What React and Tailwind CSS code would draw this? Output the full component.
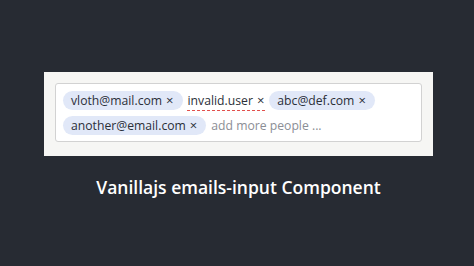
import React from 'react';

const Chip = ({ children }) => (
  <span className="inline-flex items-center h-[19px] pl-[8px] pr-[9px] rounded-full bg-[#e1e8f8] text-[#2b2f38]">
    {children}
    <span className="ml-[4px] text-[13px]">×</span>
  </span>
);

const EmailsInput = () => {
  return (
    <div className="w-[367px] h-[59px] bg-white border border-[#d2d2d2] rounded-[3px] px-[7px] pt-[7px] flex flex-wrap content-start gap-x-[4px] gap-y-[6px] text-[12.2px] leading-[19px]">
      <Chip>vloth@mail.com</Chip>
      <span className="inline-flex items-center h-[20px] -mb-[1px] px-[1px] text-[#2b2f38] border-b border-dashed border-[#e2504c]">
        invalid.user
        <span className="ml-[4px] text-[13px]">×</span>
      </span>
      <Chip>abc@def.com</Chip>
      <Chip>another@email.com</Chip>
      <span className="inline-flex items-center h-[19px] pl-[1px] text-[#8b8e95]">add more people ...</span>
    </div>
  );
};

const App = () => {
  return (
    <div className="w-[474px] h-[266px] bg-[#272b33] pt-[72px] pl-[44px]" style={{ fontFamily: '"Open Sans", sans-serif' }}>
      {/* Demo panel */}
      <div className="w-[389px] h-[84px] bg-[#f6f6f4] p-[11px]">
        <EmailsInput />
      </div>

      {/* Caption */}
      <h1 className="w-[389px] mt-[19px] text-center text-white text-[17.5px] font-semibold leading-[24px]">
        Vanillajs emails-input Component
      </h1>
    </div>
  );
};

export default App;
